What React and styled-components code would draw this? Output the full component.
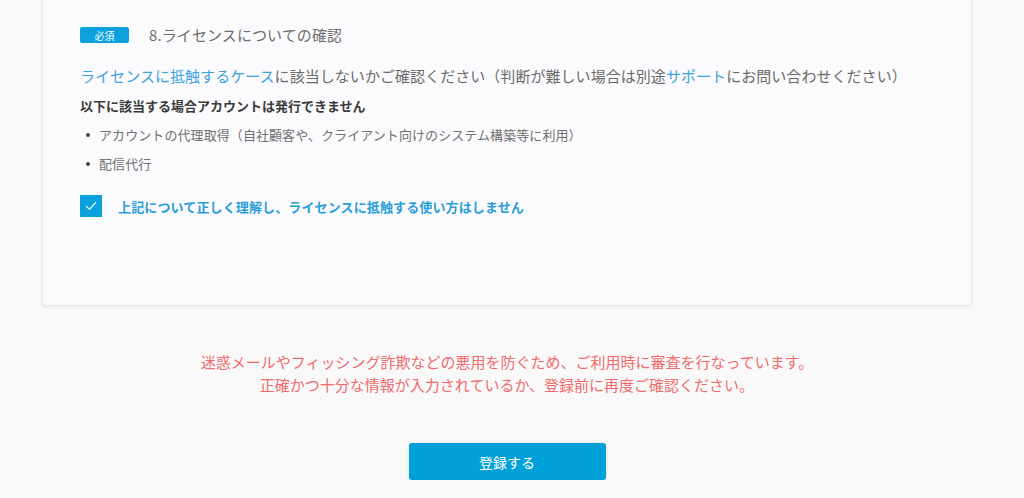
import React from "react";
import styled, { createGlobalStyle } from "styled-components";

const GlobalStyle = createGlobalStyle`
  html, body {
    margin: 0;
    padding: 0;
    background: #f9f9fa;
    font-family: "Noto Sans CJK JP", "Noto Sans", sans-serif;
    color: #666;
    overflow: hidden;
  }
`;

const Page = styled.div`
  padding: 0 52px 0 42px;
`;

const Card = styled.section`
  margin-top: -20px;
  padding: 42px 38px 88px 37px;
  background: #fbfbfd;
  border: 1px solid #e9e9ee;
  border-radius: 4px;
  box-shadow: 0 2px 3px rgba(0, 0, 0, 0.06);
`;

const TitleRow = styled.div`
  display: flex;
  align-items: center;
  gap: 20px;
  height: 24px;
`;

const Badge = styled.span`
  display: inline-flex;
  align-items: center;
  justify-content: center;
  width: 49px;
  height: 16px;
  background: #0aa1dc;
  color: #fff;
  font-size: 10px;
  border-radius: 2px;
`;

const Title = styled.h2`
  margin: 0;
  font-size: 15px;
  font-weight: 400;
  line-height: 24px;
  color: #6e6e6e;
  letter-spacing: 0.1px;
`;

const Lead = styled.p`
  margin: 17px 0 0;
  font-size: 15px;
  line-height: 24px;
  color: #6a6a6a;
  white-space: nowrap;
  letter-spacing: 0.05px;
`;

const Link = styled.a`
  color: #3ea2dc;
  text-decoration: none;
`;

const Notice = styled.p`
  margin: 8px 0 0;
  font-size: 13px;
  font-weight: 700;
  line-height: 20px;
  color: #3a3a3a;
`;

const List = styled.ul`
  margin: 9px 0 0;
  padding: 0;
  list-style: none;
  display: flex;
  flex-direction: column;
  gap: 9px;
`;

const Item = styled.li`
  position: relative;
  padding-left: 19px;
  font-size: 13px;
  line-height: 20px;
  color: #707070;
  letter-spacing: 0.08px;
  &::before {
    content: "";
    position: absolute;
    left: 6px;
    top: 8px;
    width: 4px;
    height: 4px;
    border-radius: 50%;
    background: #444;
  }
`;

const CheckRow = styled.label`
  display: flex;
  align-items: center;
  gap: 16px;
  margin-top: 21px;
  height: 22px;
  cursor: pointer;
`;

const Box = styled.span`
  display: inline-flex;
  align-items: center;
  justify-content: center;
  width: 22px;
  height: 22px;
  background: ${(p) => (p.checked ? "#0aa1dc" : "#fff")};
  border: ${(p) => (p.checked ? "none" : "1px solid #ccc")};
`;

const CheckLabel = styled.span`
  font-size: 13px;
  font-weight: 700;
  color: #2a9ed8;
  letter-spacing: 0.13px;
`;

const Warning = styled.p`
  margin: 44px 0 0;
  text-align: center;
  font-size: 15px;
  line-height: 23px;
  color: #f06b6b;
`;

const Actions = styled.div`
  display: flex;
  justify-content: center;
  margin-top: 47px;
`;

const Submit = styled.button`
  width: 197px;
  height: 37px;
  border: none;
  border-radius: 3px;
  background: #02a0d8;
  color: #fff;
  font-family: inherit;
  font-size: 14px;
  box-shadow: 0 1px 4px rgba(0, 0, 0, 0.12);
  cursor: pointer;
`;

const bullets = [
  "アカウントの代理取得（自社顧客や、クライアント向けのシステム構築等に利用）",
  "配信代行",
];

export default function App() {
  const [checked, setChecked] = React.useState(true);
  return (
    <>
      <GlobalStyle />
      <Page>
        <Card>
          <TitleRow>
            <Badge>必須</Badge>
            <Title>8.ライセンスについての確認</Title>
          </TitleRow>
          <Lead>
            <Link href="#">ライセンスに抵触するケース</Link>
            に該当しないかご確認ください（判断が難しい場合は別途
            <Link href="#">サポート</Link>
            にお問い合わせください）
          </Lead>
          <Notice>以下に該当する場合アカウントは発行できません</Notice>
          <List>
            {bullets.map((b) => (
              <Item key={b}>{b}</Item>
            ))}
          </List>
          <CheckRow onClick={() => setChecked(!checked)}>
            <Box checked={checked}>
              {checked && (
                <svg width="14" height="14" viewBox="0 0 14 14" fill="none">
                  <path
                    d="M2.5 7.5 L5.6 10.4 L11.5 3.8"
                    stroke="#e6f6fc"
                    strokeWidth="1.3"
                    strokeLinecap="round"
                    strokeLinejoin="round"
                  />
                </svg>
              )}
            </Box>
            <CheckLabel>上記について正しく理解し、ライセンスに抵触する使い方はしません</CheckLabel>
          </CheckRow>
        </Card>
        <Warning>
          迷惑メールやフィッシング詐欺などの悪用を防ぐため、ご利用時に審査を行なっています。
          <br />
          正確かつ十分な情報が入力されているか、登録前に再度ご確認ください。
        </Warning>
        <Actions>
          <Submit>登録する</Submit>
        </Actions>
      </Page>
    </>
  );
}
